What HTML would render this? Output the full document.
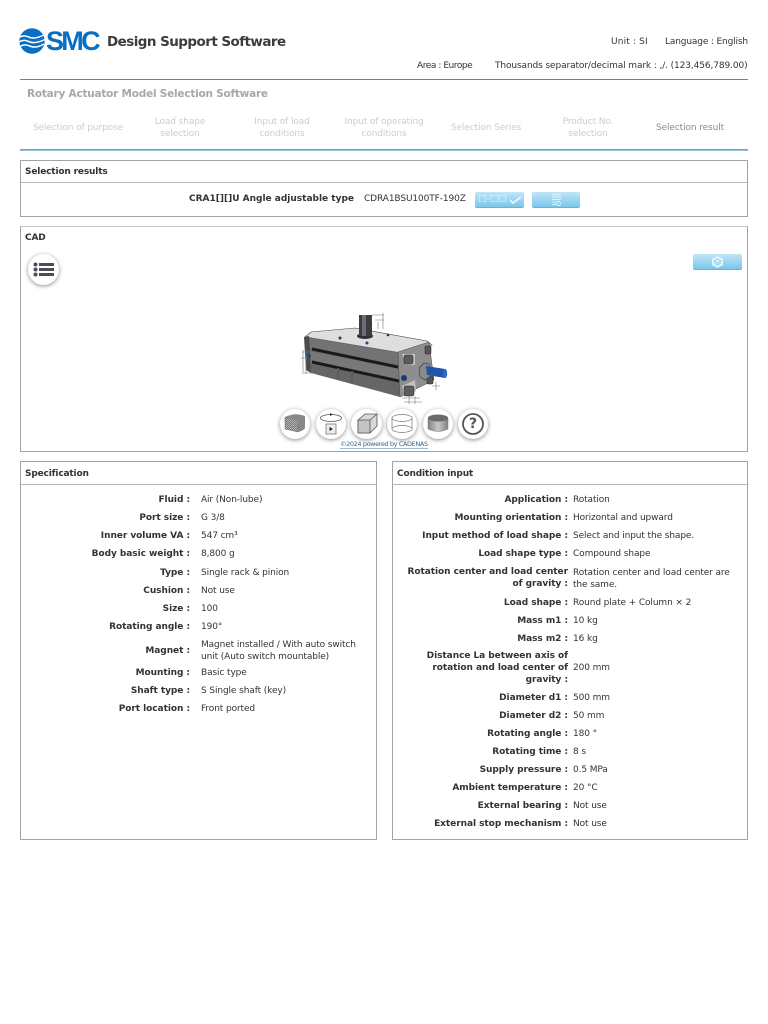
<!DOCTYPE html>
<html><head><meta charset="utf-8"><title>Design Support Software</title>
<style>
html,body{margin:0;padding:0;background:#fff}
body{width:768px;height:1024px;position:relative;overflow:hidden;font-family:"DejaVu Sans",sans-serif;font-size:9px;letter-spacing:-.11px;color:#333;filter:blur(.25px)}
.t{position:absolute;white-space:nowrap;line-height:12px;margin-top:1px}
.r{position:absolute;white-space:nowrap;line-height:12px;text-align:right;font-weight:bold;color:#333;letter-spacing:-.05px;margin-top:1px}
.l1{right:578px}.l2{right:200px}
.c{position:absolute;text-align:center;line-height:12px;color:#ccc;transform:translateX(-50%);white-space:nowrap;margin-top:1px}
.b{font-weight:bold;letter-spacing:-.16px}
.p{position:absolute;border:1px solid #a3a3a3;box-sizing:border-box}
.h{position:absolute;height:1px;background:#b5b5b5}
.btn{position:absolute;height:16px;border-radius:2px;background:linear-gradient(#bfe6f7,#7cc6ea);border-bottom:1px solid #62b5df;box-sizing:border-box}
.rnd{position:absolute;border-radius:50%;background:#fff;box-shadow:0 1px 4px rgba(0,0,0,.45)}
svg{position:absolute;overflow:visible}
</style></head><body>

<svg style="left:19px;top:28px" width="27" height="26" viewBox="0 0 27 26">
<circle cx="13" cy="13" r="12.7" fill="#0a6fc2"/>
<path d="M0 9.500c5-3 8-1 11 0s7 1 15-3M0 14c5-3 8-1 11 0s8 1 16-3M1 18.500c5-3 8-1 11 0s7 1 13-2.500" fill="none" stroke="#fff" stroke-width="1.500"/>
</svg>
<div class="t" style="left:46px;top:26px;font:bold 27px/28px 'Liberation Sans',sans-serif;letter-spacing:-2.7px;color:#0a6fc2">SMC</div>
<div class="t" style="left:107px;top:33px;font-size:13.500px;line-height:16px;font-weight:bold;letter-spacing:-.56px;color:#3c3c3c">Design Support Software</div>

<div class="t" style="left:611px;top:35px;letter-spacing:.15px">Unit : SI</div>
<div class="t" style="left:665px;top:35px;letter-spacing:-.15px">Language : English</div>
<div class="t" style="left:417px;top:59px;letter-spacing:-.45px">Area : Europe</div>
<div class="t" style="left:495px;top:59px">Thousands separator/decimal mark : ,/. (123,456,789.00)</div>
<div style="position:absolute;left:20px;top:79px;width:728px;height:1px;background:#4a8cc4"></div>

<div class="t b" style="left:27px;top:87px;font-size:10.500px;color:#a8a8a8;letter-spacing:-.22px">Rotary Actuator Model Selection Software</div>
<div class="c" style="left:78px;top:121px">Selection of purpose</div>
<div class="c" style="left:180px;top:115px">Load shape<br>selection</div>
<div class="c" style="left:282px;top:115px">Input of load<br>conditions</div>
<div class="c" style="left:384px;top:115px">Input of operating<br>conditions</div>
<div class="c" style="left:486px;top:121px">Selection Series</div>
<div class="c" style="left:588px;top:115px">Product No.<br>selection</div>
<div class="c" style="left:690px;top:121px;color:#8c8c8c">Selection result</div>
<div style="position:absolute;left:20px;top:149px;width:728px;height:2px;background:linear-gradient(#4a96d2,#a8d2ee)"></div>

<div class="p" style="left:20px;top:160px;width:728px;height:57px"></div>
<div class="h" style="left:20px;top:182px;width:728px"></div>
<div class="t b" style="left:25px;top:165px">Selection results</div>
<div class="t b" style="left:189px;top:192px;letter-spacing:0">CRA1[][]U Angle adjustable type</div>
<div class="t" style="left:364px;top:192px">CDRA1BSU100TF-190Z</div>
<div class="btn" style="left:475px;top:192px;width:49px"></div>
<div class="t" style="left:478px;top:192px;color:#e8f6fc;letter-spacing:0">□-□□</div>
<svg style="left:509px;top:195px" width="13" height="10"><path d="M1 5l3 3L12 2" fill="none" stroke="#f4fbfe" stroke-width="1.500"/></svg>
<div class="btn" style="left:532px;top:192px;width:48px"></div>
<svg style="left:550px;top:193px" width="12" height="14"><path d="M2 1.500h9M2 4h9M2 6.500h9M2 9h4M2 11.500h4" stroke="#dff2fb" stroke-width="1" fill="none"/><circle cx="8.500" cy="10.500" r="2" fill="none" stroke="#dff2fb"/></svg>

<div class="p" style="left:20px;top:226px;width:728px;height:226px;border-top-color:#c8c8c8;border-bottom-color:#a3a3a3"></div>
<div class="t b" style="left:25px;top:231px">CAD</div>
<div class="rnd" style="left:28px;top:254px;width:31px;height:31px"></div>
<svg style="left:33px;top:262px" width="21" height="15"><g fill="#4a4f57"><circle cx="2.500" cy="2.500" r="2"/><circle cx="2.500" cy="7.500" r="2"/><circle cx="2.500" cy="12.500" r="2"/><rect x="6" y="1" width="15" height="3"/><rect x="6" y="6" width="15" height="3"/><rect x="6" y="11" width="15" height="3"/></g></svg>
<div class="btn" style="left:693px;top:254px;width:49px"></div>
<svg style="left:711px;top:255px" width="13" height="14"><path d="M6.500 1l5.500 3v6l-5.500 3L1 10V4z" fill="#e4f5fc"/><path d="M3 6l3.500-2L10 6l-3.500 2z" fill="none" stroke="#8ccbea"/><path d="M3 8l3.500 2L10 8" fill="none" stroke="#8ccbea"/></svg>

<!-- actuator -->
<svg style="left:296px;top:308px" width="160" height="100" viewBox="296 308 160 100">
<path d="M305 337l6-5 44-4 72 13 5 4-34 8z" fill="#dedede" stroke="#444" stroke-width=".6"/>
<path d="M308 337l90 15 2 45-89-24z" fill="#666"/>
<path d="M309 338l89 15v12l-88-17z" fill="#737373"/>
<path d="M310 351l89 18v11l-88-17z" fill="#787878"/>
<path d="M312 347.500l86 18v3l-86-18z" fill="#191919"/>
<path d="M312 360.500l87 19v3l-87-19z" fill="#191919"/>
<path d="M338 368v11M352 371v12" stroke="#5c5c5c" stroke-width="2"/>
<path d="M304 337l5-1 2 37-5-3z" fill="#4c4c4c"/>
<circle cx="308.500" cy="356" r="2.500" fill="#1c4a82"/>
<path d="M398 352l31-10 5 38-34 17z" fill="#8e8e8e" stroke="#444" stroke-width=".5"/>
<path d="M402 354h13v11h-9zM402 386l13-6 1 11-12 6z" fill="#c0c0c0"/>
<rect x="404" y="355" width="9" height="9" rx="2" fill="#5c5c5c" stroke="#222" stroke-width=".5"/>
<rect x="404" y="386" width="10" height="10" rx="2" fill="#5c5c5c" stroke="#222" stroke-width=".5"/>
<rect x="427" y="375" width="6" height="9" rx="1" fill="#555" stroke="#222" stroke-width=".5"/>
<rect x="425" y="346" width="6" height="8" rx="1" fill="#555" stroke="#222" stroke-width=".5"/>
<circle cx="404" cy="378" r="3" fill="#153f72"/>
<path d="M419 368l5-5 5 1 2 12-6 4-5-3z" fill="#8a8a8a" stroke="#333" stroke-width=".6"/>
<path d="M426 366l19 3v9l-18-3z" fill="#1f56a8"/>
<ellipse cx="445" cy="373.500" rx="2.200" ry="4.600" fill="#2c6cc2"/>
<ellipse cx="365" cy="336" rx="8" ry="3" fill="#2e3033"/>
<path d="M359 315h13v21h-13z" fill="#3b3d40"/>
<path d="M362 315h4v21h-4z" fill="#6a6d72"/>
<circle cx="340" cy="338" r="1.500" fill="#333"/><circle cx="367" cy="343" r="1.500" fill="#1c4a82"/><circle cx="388" cy="335" r="1.300" fill="#333"/>
<path d="M372 315h12M383 313v16M375 320h9M378 322v7M302 352h8M301 358h7M304 373h10M303 350v24M306 350v24M402 398h18M404 402h18M409 396v8M415 396v8M436 390v-8M432 386h8" stroke="#777" stroke-width=".6" fill="none"/>
</svg>

<div class="rnd" style="left:280px;top:409px;width:30px;height:30px"></div>
<div class="rnd" style="left:316px;top:409px;width:30px;height:30px"></div>
<div class="rnd" style="left:351px;top:409px;width:31px;height:30px"></div>
<div class="rnd" style="left:387px;top:409px;width:30px;height:30px"></div>
<div class="rnd" style="left:423px;top:409px;width:30px;height:30px"></div>
<div class="rnd" style="left:458px;top:409px;width:30px;height:30px"></div>
<svg style="left:280px;top:409px" width="210" height="30" viewBox="280 409 210 30">
<defs><pattern id="h" width="2" height="2" patternUnits="userSpaceOnUse"><rect width="2" height="2" fill="#bbb"/><path d="M0 2L2 0" stroke="#555" stroke-width=".6"/></pattern><linearGradient id="g"><stop offset="0" stop-color="#808080"/><stop offset=".5" stop-color="#c8c8c8"/><stop offset="1" stop-color="#808080"/></linearGradient></defs>
<path d="M285 417l13 3v12l-13-3z" fill="url(#h)" stroke="#666" stroke-width=".5"/>
<path d="M285 417q10-5 20-1v12q-2 3-7 4v-12z" fill="#888"/>
<ellipse cx="331" cy="418" rx="10.500" ry="3.500" fill="none" stroke="#555" stroke-width=".8"/>
<path d="M333 414.500l-3-1.500v3z" fill="#333"/>
<rect x="326" y="424" width="10" height="10" fill="#eee" stroke="#666" stroke-width=".7"/><path d="M329.500 427v4l3.500-2z" fill="#222"/>
<path d="M358 420l7-6h12v12l-7 7h-12z" fill="#d8d8d8" stroke="#555" stroke-width=".8"/><path d="M358 420h12v13h-12z" fill="#c4c4c4" stroke="#555" stroke-width=".8"/><path d="M370 420l7-6" stroke="#555" stroke-width=".8"/>
<g fill="none" stroke="#777" stroke-width=".7"><ellipse cx="402" cy="418" rx="10" ry="3.500"/><ellipse cx="402" cy="429" rx="10" ry="3.500"/><path d="M392 418v11M412 418v11"/></g>
<path d="M428 418v11q10 5 20 0v-11z" fill="url(#g)" stroke="#777" stroke-width=".5"/><ellipse cx="438" cy="418" rx="10" ry="3.500" fill="#6a6a6a"/>
<circle cx="473" cy="424" r="10" fill="none" stroke="#555" stroke-width="1.800"/>
</svg>
<div class="t" style="left:458px;top:416px;width:30px;text-align:center;font-size:14px;line-height:14px;font-weight:bold;color:#555;letter-spacing:0">?</div>
<div class="t" style="left:340px;top:439px;font-size:6.500px;line-height:8px;letter-spacing:-.38px;color:#34689a;border-bottom:1px solid #9dbcd6">©2024 powered by CADENAS</div>

<div class="p" style="left:20px;top:461px;width:357px;height:379px"></div>
<div class="h" style="left:20px;top:484px;width:357px"></div>
<div class="t b" style="left:25px;top:467px">Specification</div>

<div class="r l1" style="top:493px">Fluid :</div><div class="t" style="left:201px;top:493px">Air (Non-lube)</div>
<div class="r l1" style="top:511px">Port size :</div><div class="t" style="left:201px;top:511px">G 3/8</div>
<div class="r l1" style="top:529px">Inner volume VA :</div><div class="t" style="left:201px;top:529px">547 cm³</div>
<div class="r l1" style="top:547px">Body basic weight :</div><div class="t" style="left:201px;top:547px">8,800 g</div>
<div class="r l1" style="top:566px">Type :</div><div class="t" style="left:201px;top:566px">Single rack &amp; pinion</div>
<div class="r l1" style="top:584px">Cushion :</div><div class="t" style="left:201px;top:584px">Not use</div>
<div class="r l1" style="top:602px">Size :</div><div class="t" style="left:201px;top:602px">100</div>
<div class="r l1" style="top:620px">Rotating angle :</div><div class="t" style="left:201px;top:620px">190°</div>
<div class="r l1" style="top:644px">Magnet :</div><div class="t" style="left:201px;top:638px">Magnet installed / With auto switch<br>unit (Auto switch mountable)</div>
<div class="r l1" style="top:666px">Mounting :</div><div class="t" style="left:201px;top:666px">Basic type</div>
<div class="r l1" style="top:684px">Shaft type :</div><div class="t" style="left:201px;top:684px">S Single shaft (key)</div>
<div class="r l1" style="top:702px">Port location :</div><div class="t" style="left:201px;top:702px">Front ported</div>

<div class="p" style="left:392px;top:461px;width:356px;height:379px"></div>
<div class="h" style="left:392px;top:484px;width:356px"></div>
<div class="t b" style="left:397px;top:467px">Condition input</div>

<div class="r l2" style="top:493px">Application :</div><div class="t" style="left:573px;top:493px">Rotation</div>
<div class="r l2" style="top:511px">Mounting orientation :</div><div class="t" style="left:573px;top:511px">Horizontal and upward</div>
<div class="r l2" style="top:529px">Input method of load shape :</div><div class="t" style="left:573px;top:529px">Select and input the shape.</div>
<div class="r l2" style="top:547px">Load shape type :</div><div class="t" style="left:573px;top:547px">Compound shape</div>
<div class="r l2" style="top:565px">Rotation center and load center<br>of gravity :</div><div class="t" style="left:573px;top:566px">Rotation center and load center are<br>the same.</div>
<div class="r l2" style="top:596px">Load shape :</div><div class="t" style="left:573px;top:596px">Round plate + Column × 2</div>
<div class="r l2" style="top:614px">Mass m1 :</div><div class="t" style="left:573px;top:614px">10 kg</div>
<div class="r l2" style="top:632px">Mass m2 :</div><div class="t" style="left:573px;top:632px">16 kg</div>
<div class="r l2" style="top:649px">Distance La between axis of<br>rotation and load center of<br>gravity :</div><div class="t" style="left:573px;top:661px">200 mm</div>
<div class="r l2" style="top:691px">Diameter d1 :</div><div class="t" style="left:573px;top:691px">500 mm</div>
<div class="r l2" style="top:709px">Diameter d2 :</div><div class="t" style="left:573px;top:709px">50 mm</div>
<div class="r l2" style="top:727px">Rotating angle :</div><div class="t" style="left:573px;top:727px">180 °</div>
<div class="r l2" style="top:745px">Rotating time :</div><div class="t" style="left:573px;top:745px">8 s</div>
<div class="r l2" style="top:763px">Supply pressure :</div><div class="t" style="left:573px;top:763px">0.5 MPa</div>
<div class="r l2" style="top:781px">Ambient temperature :</div><div class="t" style="left:573px;top:781px">20 °C</div>
<div class="r l2" style="top:799px">External bearing :</div><div class="t" style="left:573px;top:799px">Not use</div>
<div class="r l2" style="top:817px">External stop mechanism :</div><div class="t" style="left:573px;top:817px">Not use</div>
</body></html>
